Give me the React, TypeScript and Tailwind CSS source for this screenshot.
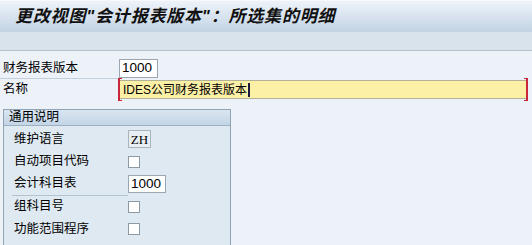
import React from 'react';

const FONT = { fontFamily: '"Liberation Sans", "Noto Sans CJK SC", sans-serif' };

function Bracket({ side }: { side: 'left' | 'right' }) {
  return (
    <span
      className={
        side === 'left'
          ? 'absolute -left-[2px] -top-[3px] -bottom-[3px] w-[4px] border-l-2 border-t border-b border-[#c8283a]'
          : 'absolute -right-[2px] -top-[3px] -bottom-[3px] w-[4px] border-r-2 border-t border-b border-[#c8283a]'
      }
    />
  );
}

function Checkbox() {
  return <div className="h-[12px] w-[12px] border border-[#8c9aa6] bg-white" />;
}

function GroupRow({ label, children, line }: { label: string; children: React.ReactNode; line?: boolean }) {
  return (
    <div className="flex h-[22.5px] items-center">
      <div className={'flex h-full w-[116px] items-center pl-[2px] text-[12.5px] text-black ' + (line ? 'border-b border-[#b5c3cf]' : '')}>
        {label}
      </div>
      {children}
    </div>
  );
}

export default function App() {
  return (
    <div className="h-[245px] w-[532px] overflow-hidden bg-[#edf2f8]" style={FONT}>
      {/* title bar */}
      <div className="flex h-[32px] items-center border-t border-[#f7f9fc] bg-gradient-to-b from-[#eef3f9] to-[#c2d3e4] pl-[15px]">
        <span className="text-[17px] font-bold italic tracking-[0.8px] text-[#111]">
          更改视图"会计报表版本"：所选集的明细
        </span>
      </div>
      {/* toolbar */}
      <div className="h-[19px] border-b border-[#b3c1cd] bg-[#d9e3ec]" />

      {/* fields */}
      <div className="flex flex-col pt-[7px]">
        <div className="flex h-[21px] items-center">
          <div className="flex h-full w-[119px] items-center border-b border-[#c3cfda] pl-[3px] text-[12.5px]">财务报表版本</div>
          <div className="flex h-[19px] w-[39px] items-center border border-[#9aa6b1] bg-white pl-[2px] text-[13.5px]">1000</div>
        </div>
        <div className="flex h-[21px] items-center">
          <div className="flex h-full w-[119px] items-center pl-[3px] text-[12.5px]">名称</div>
          <div className="relative flex h-[19px] w-[408px] items-center border border-[#b3b196] bg-[#fcf0a6] pl-[3px] text-[12px]">
            <Bracket side="left" />
            <Bracket side="right" />
            <span>IDES公司财务报表版本</span>
            <span className="ml-[1px] h-[14px] w-[2px] bg-[#1a1a40]" />
          </div>
        </div>

        {/* group box */}
        <div className="ml-[3px] mt-[9px] h-[200px] w-[228px] border border-[#8fa3b6] bg-[#dfe9f1]">
          <div className="flex h-[16px] items-center border-b border-[#9db1c3] bg-gradient-to-b from-[#d9e5f0] to-[#c3d5e6] pl-[5px] text-[12.5px]">
            通用说明
          </div>
          <div className="flex flex-col pl-[8px] pt-[2px]">
            <GroupRow label="维护语言">
              <div className="flex h-[18px] w-[23px] items-center justify-center border border-[#a8b4be] bg-[#e9eef2] text-[13px]" style={{ fontFamily: '"Liberation Serif", serif' }}>
                ZH
              </div>
            </GroupRow>
            <GroupRow label="自动项目代码">
              <Checkbox />
            </GroupRow>
            <GroupRow label="会计科目表" line>
              <div className="flex h-[18px] w-[38px] items-center border border-[#9aa6b1] bg-white pl-[2px] text-[13.5px]">1000</div>
            </GroupRow>
            <GroupRow label="组科目号">
              <Checkbox />
            </GroupRow>
            <GroupRow label="功能范围程序">
              <Checkbox />
            </GroupRow>
          </div>
        </div>
      </div>
    </div>
  );
}
